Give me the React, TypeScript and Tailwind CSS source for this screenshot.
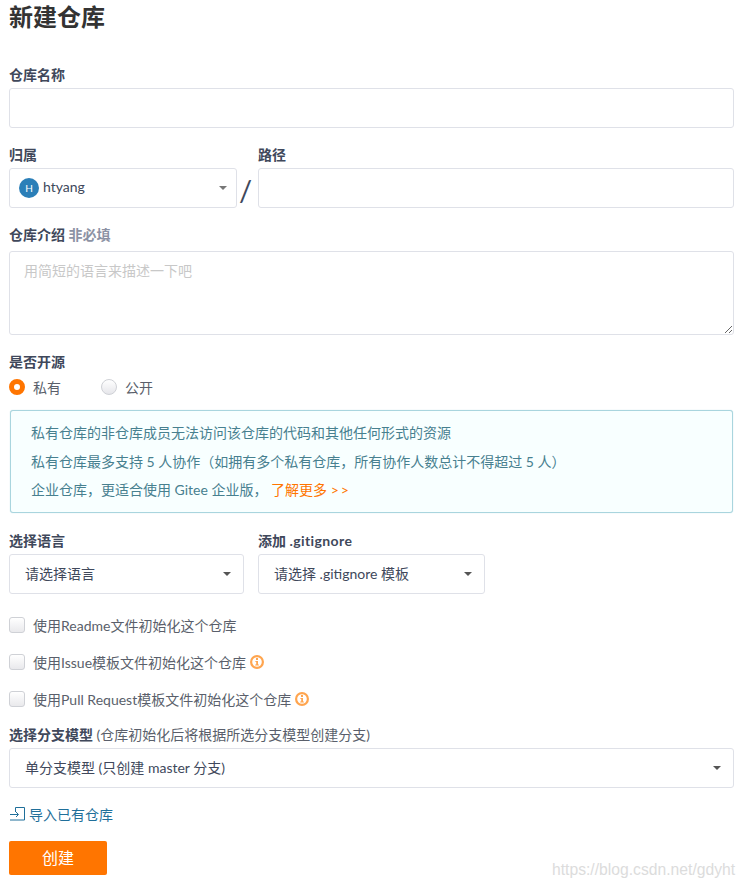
import React from "react";

function Caret({ color = "#666" }: { color?: string }) {
  return (
    <svg width="8" height="4" viewBox="0 0 8 4" className="shrink-0">
      <path d="M0 0h8L4 4z" fill={color} />
    </svg>
  );
}

function Label({ children, className = "" }: { children: React.ReactNode; className?: string }) {
  return <div className={`text-[14px] leading-[20px] font-bold text-[#40485b] ${className}`}>{children}</div>;
}

function Select({ text, className = "" }: { text: string; className?: string }) {
  return (
    <div className={`h-10 flex items-center justify-between pl-[15px] pr-[12px] border border-[#dfe1e8] rounded-[3px] bg-white text-[14px] text-[#40485b] ${className}`}>
      <span className="pb-[2px]">{text}</span>
      <Caret color="#555" />
    </div>
  );
}

function Info() {
  return (
    <svg width="14" height="14" viewBox="0 0 14 14" className="ml-[4px] shrink-0">
      <circle cx="7" cy="7" r="5.9" fill="none" stroke="#ffa54f" strokeWidth="2.2" />
      <rect x="6" y="3" width="2" height="2" fill="#ffa54f" />
      <path d="M5.4 6h2.6v3.4h.9v1.2H5.2V9.4h1V7.1h-.8z" fill="#ffa54f" />
    </svg>
  );
}

function Check({ children, className = "" }: { children: React.ReactNode; className?: string }) {
  return (
    <div className={`flex items-center h-5 text-[14px] text-[#5a5f6b] ${className}`}>
      <span className="w-4 h-4 mr-2 rounded-[3px] border border-[#cfd1d6] bg-gradient-to-b from-white to-[#e9e9ec] shrink-0" />
      {children}
    </div>
  );
}

export default function App() {
  return (
    <div className="w-[745px] h-[887px] bg-white pl-[9px] pr-[11px] relative overflow-hidden font-['Lato','Noto_Sans_CJK_SC',sans-serif]">
      <h1 className="h-[34px] text-[24px] leading-[34px] font-bold text-[#333333]">新建仓库</h1>

      <Label className="mt-[31px]">仓库名称</Label>
      <input className="block w-full h-10 mt-[3px] border border-[#dfe1e8] rounded-[3px] outline-none" />

      <div className="flex mt-[17px]">
        <div className="w-[228px]">
          <Label>归属</Label>
          <div className="h-10 mt-[3px] flex items-center justify-between pl-[9px] pr-[9px] border border-[#dfe1e8] rounded-[3px] text-[14px] text-[#40485b]">
            <span className="flex items-center">
              <span className="w-5 h-5 rounded-full bg-[#2b7fb8] text-white text-[10px] flex items-center justify-center mr-[4px]">H</span>
              <span className="relative top-[-2px]">htyang</span>
            </span>
            <Caret color="#777" />
          </div>
        </div>
        <div className="w-[21px] pt-[25px] pl-[2px] text-[29px] leading-[40px] text-[#40485b] text-left font-normal">/</div>
        <div className="flex-1">
          <Label>路径</Label>
          <input className="block w-full h-10 mt-[3px] border border-[#dfe1e8] rounded-[3px] outline-none" />
        </div>
      </div>

      <Label className="mt-[15px]">
        仓库介绍 <span className="text-[#8c92a4]">非必填</span>
      </Label>
      <textarea
        className="block w-full h-[84px] mt-[6px] px-[14px] py-[9px] border border-[#dfe1e8] rounded-[3px] outline-none text-[14px] leading-[20px] placeholder:text-[#c8c8c8]"
        placeholder="用简短的语言来描述一下吧"
      />

      <Label className="mt-[17px]">是否开源</Label>
      <div className="flex items-center h-5 mt-[5px] text-[14px] text-[#5a5f6b]">
        <span className="w-4 h-4 rounded-full border-[5px] border-[#ff7500] bg-white mr-2 shrink-0" />
        <span className="w-[68px]">私有</span>
        <span className="w-4 h-4 rounded-full border border-[#cfd1d6] bg-gradient-to-b from-white to-[#e6e6ea] mr-2 shrink-0" />
        <span>公开</span>
      </div>

      <div className="ml-px mr-px mt-[13px] h-[103px] border border-[#a9d5de] rounded-[3px] bg-[#f8ffff] pl-5 pt-[8px] text-[14px] leading-[28.5px] text-[#47808f] shadow-[0_0_1px_#a9d5de]">
        <div>私有仓库的非仓库成员无法访问该仓库的代码和其他任何形式的资源</div>
        <div>私有仓库最多支持 5 人协作（如拥有多个私有仓库，所有协作人数总计不得超过 5 人）</div>
        <div>
          企业仓库，更适合使用 Gitee 企业版， <span className="text-[#ff7500]">了解更多 <span className="tracking-[2px]">&gt;&gt;</span></span>
        </div>
      </div>

      <div className="flex mt-[18px]">
        <div className="w-[235px] mr-[14px]">
          <Label>选择语言</Label>
          <Select text="请选择语言" className="mt-[3px]" />
        </div>
        <div className="w-[227px]">
          <Label>
            添加 <span className="tracking-[0.4px]">.gitignore</span>
          </Label>
          <Select text="请选择 .gitignore 模板" className="mt-[3px]" />
        </div>
      </div>

      <Check className="mt-[21px]">使用Readme文件初始化这个仓库</Check>
      <Check className="mt-[17px]">
        使用Issue模板文件初始化这个仓库
        <Info />
      </Check>
      <Check className="mt-[17px]">
        使用Pull Request模板文件初始化这个仓库
        <Info />
      </Check>

      <Label className="mt-[16px]">
        选择分支模型 <span className="font-normal text-[#5a5f6b]">(仓库初始化后将根据所选分支模型创建分支)</span>
      </Label>
      <Select text="单分支模型 (只创建 master 分支)" className="mt-[3px]" />

      <div className="flex items-center h-5 mt-[16px] text-[14px] text-[#1f6f9a]">
        <svg width="16" height="15" viewBox="0 0 16 15" fill="none" stroke="#1f6f9a" strokeWidth="1" className="mr-[4px]">
          <path d="M6.5 5V.5H15.5V13H1" />
          <path d="M1 7.5h8M7 5l2.5 2.5L7 10" />
        </svg>
        导入已有仓库
      </div>

      <div className="w-[98px] h-[34px] mt-[17px] rounded-[2px] bg-[#ff7500] text-white text-[16px] flex items-center justify-center">创建</div>

      <div className="absolute left-[552px] top-[860px] text-[15.7px] leading-5 text-[#dcdcdc] font-['Liberation_Sans',sans-serif]">
        https://blog.csdn.net/gdyht
      </div>
    </div>
  );
}
